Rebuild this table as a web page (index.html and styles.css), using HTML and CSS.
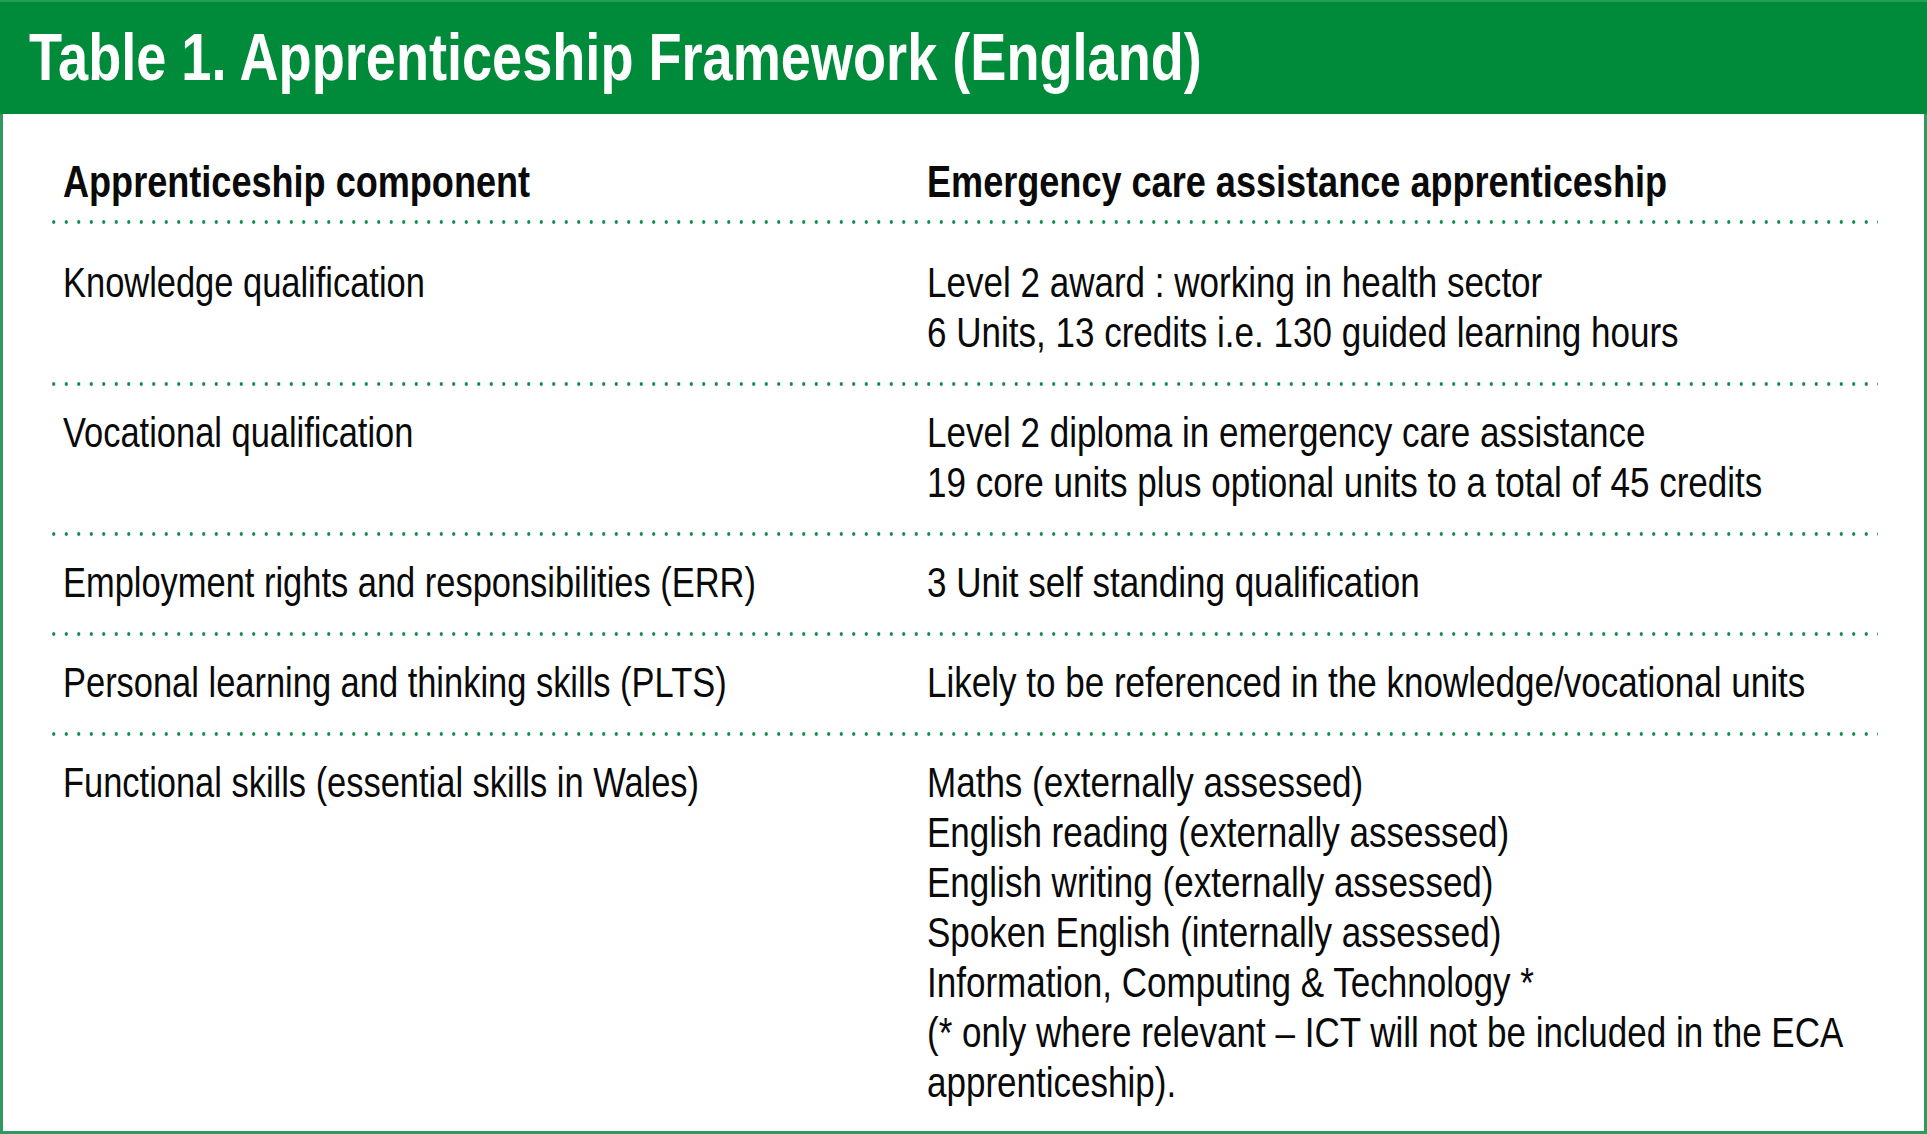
FILE: index.html
```html
<!DOCTYPE html>
<html lang="en">
<head>
<meta charset="utf-8">
<title>Table 1. Apprenticeship Framework (England)</title>
<link rel="stylesheet" href="styles.css">
</head>
<body>
<div class="frame">
  <header class="banner">
    <h1 class="title"><span class="narrow">Table 1. Apprenticeship Framework (England)</span></h1>
  </header>
  <main class="panel">
    <div class="table">
      <div class="row head">
        <div class="cell left"><span class="narrow">Apprenticeship component</span></div>
        <div class="cell right"><span class="narrow">Emergency care assistance apprenticeship</span></div>
      </div>
      <div class="row first">
        <div class="cell left"><span class="narrow">Knowledge qualification</span></div>
        <div class="cell right"><span class="narrow">Level 2 award : working in health sector<br>6 Units, 13 credits i.e. 130 guided learning hours</span></div>
      </div>
      <div class="row">
        <div class="cell left"><span class="narrow">Vocational qualification</span></div>
        <div class="cell right"><span class="narrow">Level 2 diploma in emergency care assistance<br>19 core units plus optional units to a total of 45 credits</span></div>
      </div>
      <div class="row">
        <div class="cell left"><span class="narrow">Employment rights and responsibilities (ERR)</span></div>
        <div class="cell right"><span class="narrow">3 Unit self standing qualification</span></div>
      </div>
      <div class="row">
        <div class="cell left"><span class="narrow">Personal learning and thinking skills (PLTS)</span></div>
        <div class="cell right"><span class="narrow">Likely to be referenced in the knowledge/vocational units</span></div>
      </div>
      <div class="row last">
        <div class="cell left"><span class="narrow">Functional skills (essential skills in Wales)</span></div>
        <div class="cell right"><span class="narrow">Maths (externally assessed)<br>English reading (externally assessed)<br>English writing (externally assessed)<br>Spoken English (internally assessed)<br>Information, Computing &amp; Technology *<br>(* only where relevant – ICT will not be included in the ECA<br>apprenticeship).</span></div>
      </div>
    </div>
  </main>
</div>
</body>
</html>
```

FILE: styles.css
```css
html, body {
  margin: 0;
  padding: 0;
  background: #ffffff;
}

body {
  font-family: "Liberation Sans", Arial, sans-serif;
  color: #0a0a0a;
}

.frame {
  width: 1927px;
  height: 1134px;
  display: flex;
  flex-direction: column;
  overflow: hidden;
}

.narrow {
  display: inline-block;
  white-space: nowrap;
  transform: scaleX(0.82);
  transform-origin: 0 0;
}

.banner {
  flex: 0 0 114px;
  height: 114px;
  box-sizing: border-box;
  background: #008b3a;
  border-top: 2px solid #23a055;
  padding: 23px 0 0 29px;
}

.title {
  margin: 0;
  font-size: 66px;
  line-height: 64px;
  font-weight: 700;
  color: #ffffff;
  letter-spacing: 0;
}

.panel {
  flex: 1 1 auto;
  box-sizing: border-box;
  border: 3px solid #2e9b5d;
  border-top: 0;
}

.table {
  width: 1826px;
  margin-left: 49px;
}

.row {
  display: grid;
  grid-template-columns: 875px 1fr;
  padding: 22px 0 28px;
  background-image: radial-gradient(circle, #0e8a48 1.5px, rgba(14, 138, 72, 0) 2px);
  background-size: 12.5px 4px;
  background-repeat: repeat-x;
  background-position: -4.5px 100%;
  font-size: 42px;
  line-height: 50px;
}

.row.head {
  padding: 43px 0 17px;
  font-size: 44px;
  font-weight: 700;
}

.row.first {
  padding-top: 34px;
}

.row.last {
  background-image: none;
  padding-bottom: 0;
}

.cell {
  min-width: 0;
}

.cell.left {
  padding-left: 11px;
}

.row:not(.head) .cell.right .narrow {
  transform: scaleX(0.834);
}
```
